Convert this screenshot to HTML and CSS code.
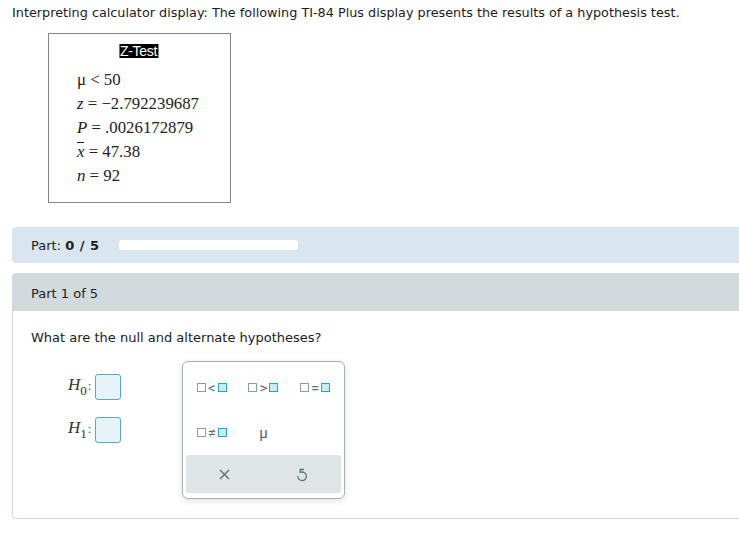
FILE: index.html
```html
<!DOCTYPE html>
<html lang="en">
<head>
  <meta charset="UTF-8" />
  <title>Hypothesis test</title>
  <link rel="stylesheet" href="styles.css">
</head>
<body>
  <p class="prompt">Interpreting calculator display: The following TI-84 Plus display presents the results of a hypothesis test.</p>

  <!-- calculator screen -->
  <div class="calc">
    <div class="calc-title">Z-Test</div>
    <div class="calc-line">μ &lt; 50</div>
    <div class="calc-line"><i>z</i> = −2.792239687</div>
    <div class="calc-line"><i>P</i> = .0026172879</div>
    <div class="calc-line"><span class="xbar"><i>x</i></span> = 47.38</div>
    <div class="calc-line"><i>n</i> = 92</div>
  </div>

  <div class="part-bar">
    <span>Part: <b>0 / 5</b></span>
    <div class="progress"></div>
  </div>

  <div class="card">
    <div class="card-head">Part 1 of 5</div>
    <div class="card-body">
      <p class="question">What are the null and alternate hypotheses?</p>

      <div class="answer">
        <div class="hyps">
          <div class="hyp">
            <span class="hyp-label"><i>H</i><sub>0</sub><span class="colon">:</span></span>
            <span class="slot"></span>
          </div>
          <div class="hyp">
            <span class="hyp-label"><i>H</i><sub>1</sub><span class="colon">:</span></span>
            <span class="slot"></span>
          </div>
        </div>

        <!-- symbol palette -->
        <div class="palette">
          <div class="keys">
            <div class="key"><span class="sq"></span><span class="op">&lt;</span><span class="sq fill"></span></div>
            <div class="key"><span class="sq"></span><span class="op">&gt;</span><span class="sq fill"></span></div>
            <div class="key"><span class="sq"></span><span class="op">=</span><span class="sq fill"></span></div>
            <div class="key"><span class="sq"></span><span class="op">≠</span><span class="sq fill"></span></div>
            <div class="key mu">μ</div>
          </div>
          <div class="actions">
            <div class="action">
              <svg width="11" height="11" viewBox="0 0 11 11"><path d="M1 1 L10 10 M10 1 L1 10" stroke="#5b6f77" stroke-width="1.4" fill="none"/></svg>
            </div>
            <div class="action">
              <svg width="12" height="15" viewBox="0 0 12 15"><path d="M8 2.5 H4.2 V6" stroke="#5b6f77" stroke-width="1.3" fill="none"/><path d="M4.5 5.3 A4.3 4.3 0 1 1 1.8 9" stroke="#5b6f77" stroke-width="1.3" fill="none"/></svg>
            </div>
          </div>
        </div>
      </div>
    </div>
  </div>
</body>
</html>
```

FILE: styles.css
```css
body {
  margin: 0;
  font-family: 'DejaVu Sans', Verdana, sans-serif;
  font-size: 13px;
  color: #1c1c1c;
  background: #fff;
  overflow: hidden;
}

.prompt {
  margin: 0;
  padding: 5px 12px 0;
  font-size: 12.8px;
  line-height: 16px;
}

/* Calculator display */
.calc {
  width: 153px;
  margin: 12px 0 0 48px;
  padding: 10px 0 14px 28px;
  border: 1px solid #858585;
  font-family: 'Liberation Serif', 'Times New Roman', serif;
  font-size: 16.8px;
  color: #222;
}
.calc-title {
  width: fit-content;
  margin: 0 auto 10px -15px;
  position: relative;
  left: 50%;
  transform: translateX(-50%);
  background: #000;
  color: #fff;
  font-family: 'Liberation Sans', Arial, sans-serif;
  font-size: 14px;
  line-height: 14px;
  padding: 0 1px;
  letter-spacing: -0.3px;
}
.calc-line {
  height: 24px;
  line-height: 24px;
}
.xbar {
  display: inline-block;
  border-top: 1px solid #222;
  line-height: 12px;
  padding-top: 3px;
  vertical-align: 0;
}

/* Part progress */
.part-bar {
  margin: 24px 0 0 12px;
  height: 36px;
  background: #dae6ef;
  border-radius: 4px 0 0 4px;
  display: flex;
  align-items: center;
  padding-left: 19px;
  gap: 19px;
}
.part-bar b {
  letter-spacing: 0.5px;
}
.progress {
  width: 179px;
  height: 10px;
  background: #fff;
  border-radius: 3px;
}

/* Question card */
.card {
  margin: 10px 0 0 12px;
  border: 1px solid #d3dadd;
  border-right: none;
  border-radius: 4px 0 0 4px;
}
.card-head {
  background: #d2dadd;
  height: 37px;
  line-height: 39px;
  padding-left: 18px;
}
.card-body {
  padding: 19px 0 19px 18px;
}
.question {
  margin: 0;
  line-height: 16px;
}

.answer {
  display: flex;
  align-items: flex-start;
  margin-top: 15px;
}
.hyps {
  display: flex;
  flex-direction: column;
  gap: 17px;
  padding: 13px 0 0 37px;
  width: 53px;
}
.hyp {
  display: flex;
  align-items: center;
}
.hyp-label {
  font-family: 'Liberation Serif', 'Times New Roman', serif;
  font-size: 17px;
  color: #333;
  width: 27px;
  white-space: nowrap;
}
.hyp-label sub {
  font-size: 13px;
  vertical-align: -5px;
}
.colon {
  font-size: 13px;
  margin-left: 1px;
  color: #555;
}
.slot {
  width: 24px;
  height: 24px;
  border: 1px solid #5fa8bc;
  border-radius: 3px;
  background: #e6f4f9;
}

/* Symbol palette */
.palette {
  margin-left: 61px;
  width: 155px;
  padding: 3px 3px 5px;
  border: 1px solid #a3b1b6;
  border-radius: 6px;
  box-shadow: 0 2px 6px rgba(0, 0, 0, 0.12);
  background: #fff;
}
.keys {
  display: grid;
  grid-template-columns: repeat(3, 1fr);
  grid-auto-rows: 45px;
}
.key {
  display: flex;
  align-items: center;
  justify-content: center;
  gap: 1px;
  font-family: 'Roboto', 'DejaVu Sans', sans-serif;
  font-size: 15px;
  color: #5d7078;
}
.key.mu {
  font-size: 15px;
  color: #52666e;
}
.op {
  min-width: 10px;
  text-align: center;
}
.sq {
  width: 7px;
  height: 7px;
  border: 1.5px solid #8c9ea5;
  background: #fff;
}
.sq.fill {
  border-color: #2aa3bd;
  background: #c9ebf2;
}
.actions {
  display: grid;
  grid-template-columns: 1fr 1fr;
  height: 38px;
  background: #dfe4e7;
  border-radius: 3px;
}
.action {
  display: flex;
  align-items: center;
  justify-content: center;
}
```
